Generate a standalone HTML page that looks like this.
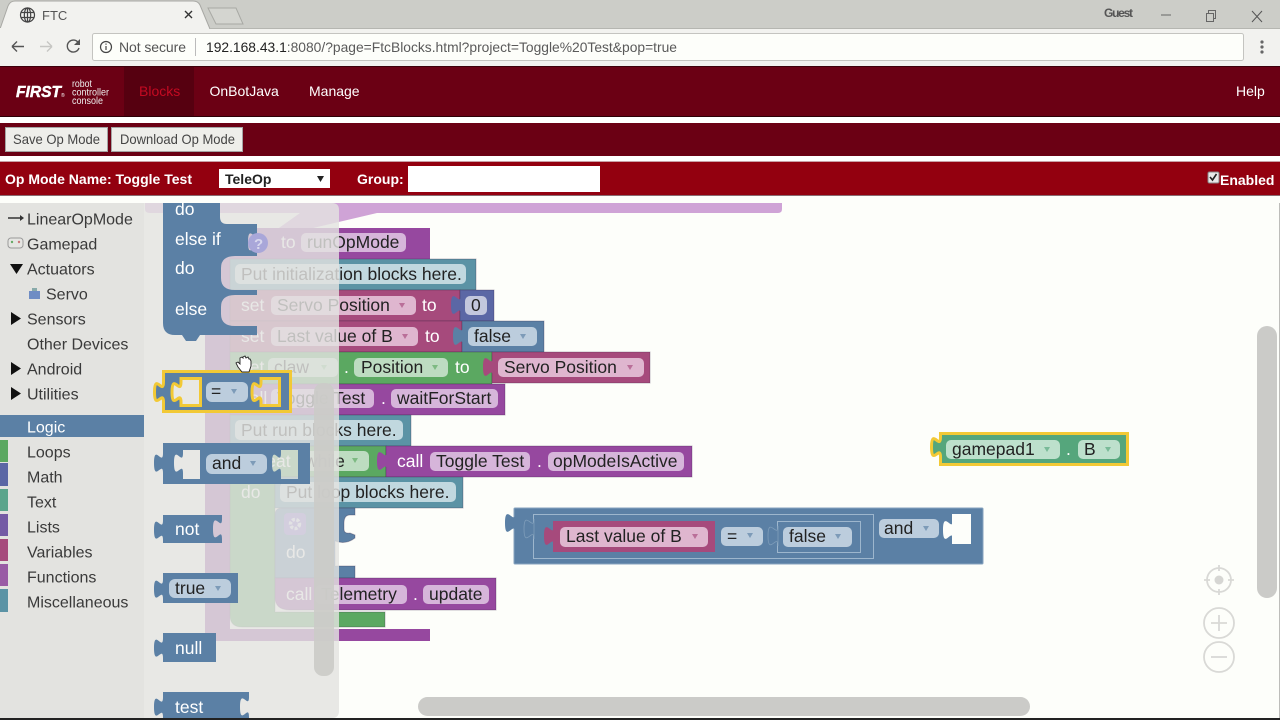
<!DOCTYPE html>
<html lang="en"><head><meta charset="utf-8"><title>FTC</title>
<style>
html,body{margin:0;padding:0;width:1280px;height:720px;overflow:hidden;background:#fdfefa}
svg{display:block;position:absolute;left:0;top:0}
text{font-family:"Liberation Sans",Arial,sans-serif;white-space:pre}
.b{font-size:17.5px;fill:#fff}
.f{font-size:17.5px;fill:#222}
.s{font-size:16px;fill:#3a3a3a}
.c{font-size:14px;fill:#5a5a5a}
.n{font-size:14px;fill:#fff}
.h{font-size:14px;fill:#444}
.w{font-size:14px;fill:#fff;font-weight:bold}
.rows rect,.rows path{stroke:rgba(50,30,60,.28);stroke-width:1}
</style></head><body>
<svg width="1280" height="720" viewBox="0 0 1280 720" xmlns="http://www.w3.org/2000/svg">
<defs>
<path id="tab" d="M1 0c0,13.500 -10,-11 -10,10s10,-4 10,10z"/>
<path id="ar" d="M-3 1h6l-3 5z" opacity=".65"/>
</defs>

<!-- browser chrome -->
<rect width="1280" height="29" fill="#cccdc8"/>
<path d="M0 29 L8 6 Q10 1 15 1 H193 Q198 1 200 5 L210 29z" fill="#f2f2ef" stroke="#a8a8a4"/>
<path d="M208 8 H236 L243 24 H216z" fill="#d4d5d0" stroke="#a8a9a4"/>
<rect y="28" width="1280" height="38" fill="#f2f2ef"/>
<rect y="28" x="209" width="1071" height="1" fill="#b5b6b1"/>
<g fill="none" stroke="#444" stroke-width="1.2"><circle cx="27.500" cy="15" r="7"/><ellipse cx="27.500" cy="15" rx="3.200" ry="7"/><path d="M21 12.500h13M21 17.500h13M27.500 8v14"/></g>
<text x="42" y="20" class="h" style="font-size:13px;fill:#555">FTC</text>
<path d="M185 11l7 7M192 11l-7 7" stroke="#333" stroke-width="1.400"/>
<text x="1104" y="17" style="font-size:12px;fill:#555;font-weight:bold" textLength="29">Guest</text>
<path d="M1161 15h10" stroke="#666"/>
<path d="M1206.500 13.500h7v8h-7zM1208.500 13.500v-3h7v8h-2" fill="none" stroke="#666"/>
<path d="M1252 11l10 11M1262 11l-10 11" stroke="#555" stroke-width="1"/>
<path d="M12 46.500h12M12 46.500l5-5M12 46.500l5 5" fill="none" stroke="#555" stroke-width="1.400"/>
<path d="M40 46.500h12M52 46.500l-5-5M52 46.500l-5 5" fill="none" stroke="#c6c6c3" stroke-width="1.400"/>
<path d="M78.500 43a6 6 0 1 0 .5 5" fill="none" stroke="#555" stroke-width="1.400"/><path d="M80 39v6h-6z" fill="#555"/>
<rect x="92.500" y="33.500" width="1151" height="27" rx="2" fill="#fdfefa" stroke="#c4c4c0"/>
<circle cx="106" cy="47" r="5.500" fill="none" stroke="#444" stroke-width="1.200"/><path d="M106 46v4M106 43.500v1.300" stroke="#444" stroke-width="1.200"/>
<text x="119" y="52" class="c" textLength="67" style="font-size:14px;fill:#555">Not secure</text>
<rect x="195" y="38" width="1" height="18" fill="#bbb"/>
<text x="206" y="52" class="c" textLength="471" lengthAdjust="spacingAndGlyphs"><tspan fill="#222">192.168.43.1</tspan>:8080/?page=FtcBlocks.html?project=Toggle%20Test&amp;pop=true</text>
<g fill="#666"><circle cx="1262" cy="42" r="1.600"/><circle cx="1262" cy="47" r="1.600"/><circle cx="1262" cy="52" r="1.600"/></g>

<!-- app header -->
<rect y="66" width="1280" height="51" fill="#6b0014"/>
<rect y="66" width="1280" height="1" fill="#3d000b"/>
<rect x="124" y="67" width="70" height="49" fill="#560010"/>
<rect y="116" width="1280" height="1" fill="#2e0008"/>
<text x="16" y="97" style="font-size:16px;font-weight:bold;font-style:italic;fill:#fff;stroke:#fff;stroke-width:.5" textLength="45" lengthAdjust="spacingAndGlyphs">FIRST</text>
<text x="61" y="97" style="font-size:5px;fill:#fff">®</text>
<text x="72" y="87" style="font-size:10px;fill:#eee" textLength="20" lengthAdjust="spacingAndGlyphs">robot</text>
<text x="72" y="95.500" style="font-size:10px;fill:#eee" textLength="37" lengthAdjust="spacingAndGlyphs">controller</text>
<text x="72" y="104" style="font-size:10px;fill:#eee" textLength="31" lengthAdjust="spacingAndGlyphs">console</text>
<text x="139" y="96" style="font-size:14px;fill:#c40a22">Blocks</text>
<text x="209.500" y="96" class="n">OnBotJava</text>
<text x="309" y="96" class="n">Manage</text>
<text x="1236" y="96" class="n">Help</text>

<rect y="117" width="1280" height="6" fill="#fff"/>
<rect y="123" width="1280" height="33" fill="#6b0014"/>
<rect y="156" width="1280" height="6" fill="#fff"/>
<rect y="161" width="1280" height="1" fill="#c9a0a6"/>
<rect y="162" width="1280" height="34" fill="#93000f"/>
<rect y="195" width="1280" height="1" fill="#8a6a70"/>
<rect x="5.500" y="127.500" width="102" height="24" fill="#eeeeea" stroke="#a5a5a5"/>
<text x="13" y="144" class="h" textLength="87" lengthAdjust="spacingAndGlyphs">Save Op Mode</text>
<rect x="111.500" y="127.500" width="131" height="24" fill="#eeeeea" stroke="#a5a5a5"/>
<text x="120" y="144" class="h" textLength="115" lengthAdjust="spacingAndGlyphs">Download Op Mode</text>
<text x="5" y="184" class="w" textLength="187">Op Mode Name: Toggle Test</text>
<rect x="219" y="169" width="111" height="19" fill="#fff"/>
<text x="225" y="184" style="font-size:14px;font-weight:bold;fill:#222">TeleOp</text>
<path d="M317 176h7l-3.500 6z" fill="#222"/>
<text x="357" y="184" class="w">Group:</text>
<rect x="408" y="166" width="192" height="26" fill="#fff"/>
<rect x="1208" y="172" width="11" height="11" rx="1.500" fill="#e8e8e8" stroke="#888"/>
<path d="M1210 177l2.500 3 4-6" fill="none" stroke="#222" stroke-width="1.600"/>
<text x="1220" y="185" class="w">Enabled</text>

<!-- workspace blocks -->
<rect y="196" width="1280" height="524" fill="#fdfefa"/>
<path d="M262 240 L377 213 H300z" fill="#cfa3d6"/>
<path d="M145 203H782V209Q782 213 778 213H150Q145 213 145 209z" fill="#cfa3d6"/>

<!-- outer function block -->
<path d="M212 228H430V259H230V629H430V641H212Q205 641 205 634V235Q205 228 212 228z" fill="#96489f"/>
<g class="rows">
<rect x="230" y="259" width="246" height="31" fill="#5b93a5"/>
<rect x="230" y="290" width="230" height="31" fill="#a64a7c"/>
<rect x="460" y="290" width="34" height="31" fill="#5b67a5"/>
<rect x="230" y="321" width="232" height="31" fill="#a64a7c"/>
<rect x="462" y="321" width="82" height="31" fill="#5b80a5"/>
<rect x="230" y="352" width="262" height="32" fill="#5ba861"/>
<rect x="492" y="352" width="158" height="31" fill="#a64a7c"/>
<rect x="230" y="384" width="275" height="31" fill="#96489f"/>
<rect x="230" y="415" width="181" height="31" fill="#5b93a5"/>
<path d="M230 446H386V477H275V612H385V627H242Q230 627 230 615z" fill="#5ba861"/>
<rect x="386" y="446" width="306" height="31" fill="#96489f"/>
<rect x="275" y="477" width="188" height="31" fill="#5b93a5"/>
<path d="M282 508H355V515H350Q344 515 344 523V529Q344 534 350 533L355 535V538Q346 545 335 541V566H355V578H275V515Q275 508 282 508z" fill="#5b80a5"/>
<path d="M275 578H496V610H290Q275 610 275 597z" fill="#96489f"/>
</g>
<use href="#tab" x="460" y="295" fill="#5b67a5"/>
<use href="#tab" x="462" y="326" fill="#5b80a5"/>
<use href="#tab" x="492" y="357" fill="#a64a7c"/>
<use href="#tab" x="386" y="451" fill="#96489f"/>
<rect x="284" y="513" width="22" height="22" rx="4" fill="#8a6fd0"/>
<circle cx="295" cy="524" r="4.500" fill="none" stroke="#dcdcf0" stroke-width="3.500" stroke-dasharray="3 1.500"/>

<g>
<rect x="301" y="233" width="105" height="19" rx="5" fill="#d6b5da"/>
<text x="281" y="248" class="b">to</text><text x="307" y="248" class="f">runOpMode</text>
<rect x="235" y="264" width="231" height="20" rx="5" fill="#c1d8df"/>
<text x="241" y="280" class="f">Put initialization blocks here.</text>
<text x="241" y="311" class="b">set</text>
<rect x="271" y="296" width="145" height="19" rx="5" fill="#dfb6cf"/>
<text x="277" y="311" class="f">Servo Position</text>
<use href="#ar" x="402" y="302" fill="#a64a7c"/>
<text x="422" y="311" class="b">to</text>
<rect x="465" y="296" width="22" height="19" rx="5" fill="#c3c7dd"/><text x="471" y="311" class="f">0</text>
<text x="241" y="342" class="b">set</text>
<rect x="271" y="327" width="147" height="19" rx="5" fill="#dfb6cf"/>
<text x="277" y="342" class="f">Last value of B</text>
<use href="#ar" x="405" y="333" fill="#a64a7c"/>
<text x="425" y="342" class="b">to</text>
<rect x="468" y="327" width="69" height="19" rx="5" fill="#bccddd"/>
<text x="474" y="342" class="f">false</text><use href="#ar" x="523" y="333" fill="#5b80a5"/>
<text x="241" y="373" class="b">set</text>
<rect x="268" y="358" width="70" height="19" rx="5" fill="#bddcc1"/>
<text x="274" y="373" class="f">claw</text><use href="#ar" x="324" y="364" fill="#5ba861"/>
<text x="344" y="373" class="b">.</text>
<rect x="354" y="358" width="94" height="19" rx="5" fill="#bddcc1"/>
<text x="361" y="373" class="f">Position</text><use href="#ar" x="435" y="364" fill="#5ba861"/>
<text x="455" y="373" class="b">to</text>
<rect x="498" y="358" width="146" height="19" rx="5" fill="#dfb6cf"/>
<text x="504" y="373" class="f">Servo Position</text><use href="#ar" x="630" y="364" fill="#a64a7c"/>
<text x="241" y="404" class="b">call</text>
<rect x="271" y="389" width="103" height="19" rx="5" fill="#d6b5da"/>
<text x="277" y="404" class="f">Toggle Test</text>
<text x="381" y="404" class="b">.</text>
<rect x="391" y="389" width="107" height="19" rx="5" fill="#d6b5da"/>
<text x="397" y="404" class="f">waitForStart</text>
<rect x="235" y="420" width="168" height="20" rx="5" fill="#c1d8df"/>
<text x="241" y="436" class="f">Put run blocks here.</text>
<text x="241" y="467" class="b">repeat</text>
<rect x="300" y="451" width="69" height="20" rx="5" fill="#bddcc1"/>
<text x="305" y="467" class="f">while</text><use href="#ar" x="355" y="457" fill="#5ba861"/>
<text x="397" y="467" class="b">call</text>
<rect x="430" y="452" width="100" height="19" rx="5" fill="#d6b5da"/>
<text x="436" y="467" class="f">Toggle Test</text>
<text x="537" y="467" class="b">.</text>
<rect x="548" y="452" width="136" height="19" rx="5" fill="#d6b5da"/>
<text x="553" y="467" class="f">opModeIsActive</text>
<text x="241" y="498" class="b">do</text>
<rect x="280" y="482" width="176" height="20" rx="5" fill="#c1d8df"/>
<text x="286" y="498" class="f">Put loop blocks here.</text>
<text x="286" y="558" class="b">do</text>
<text x="286" y="600" class="b">call</text>
<rect x="315" y="585" width="92" height="19" rx="5" fill="#d6b5da"/>
<text x="321" y="600" class="f">Telemetry</text>
<text x="413" y="600" class="b">.</text>
<rect x="423" y="585" width="66" height="19" rx="5" fill="#d6b5da"/>
<text x="429" y="600" class="f">update</text>
</g>

<!-- free blocks -->
<rect x="514" y="508" width="469" height="56" rx="1" fill="#5b80a5" stroke="#87a3bf" stroke-width="1"/>
<use href="#tab" x="514" y="513" fill="#5b80a5"/>
<rect x="533.500" y="514.500" width="340" height="44" fill="none" stroke="#9db6cd"/>
<use href="#tab" x="533" y="519" fill="#5b80a5" stroke="#7f9dba" stroke-width=".8"/>
<rect x="553" y="521" width="162" height="31" fill="#a64a7c"/><use href="#tab" x="553" y="526" fill="#a64a7c"/>
<rect x="560" y="527" width="148" height="20" rx="5" fill="#dfb6cf"/>
<text x="566" y="542" class="f">Last value of B</text><use href="#ar" x="695" y="533" fill="#a64a7c"/>
<rect x="721" y="527" width="42" height="19" rx="5" fill="#bccddd"/>
<text x="727" y="542" class="f">=</text><use href="#ar" x="750" y="532" fill="#5b80a5"/>
<rect x="777.500" y="521.500" width="83" height="31" fill="none" stroke="#9db6cd"/>
<use href="#tab" x="777" y="526" fill="#5b80a5" stroke="#7f9dba" stroke-width=".8"/>
<rect x="783" y="527" width="69" height="20" rx="5" fill="#bccddd"/>
<text x="789" y="542" class="f">false</text><use href="#ar" x="838" y="533" fill="#5b80a5"/>
<rect x="879" y="519" width="60" height="19" rx="5" fill="#bccddd"/>
<text x="884" y="534" class="f">and</text><use href="#ar" x="926" y="525" fill="#5b80a5"/>
<rect x="952" y="514" width="19" height="30" fill="#fdfefa"/><use href="#tab" x="952" y="520" fill="#fdfefa"/>

<path d="M940.500 433.500H1127.500V464.500H940.500V457c0,-13 -9,10 -9,-10s9,4 9,-10z" fill="#55a67c" stroke="#f2c935" stroke-width="3"/>
<rect x="946" y="440" width="114" height="19" rx="5" fill="#bde0cc"/>
<text x="952" y="455" class="f">gamepad1</text><use href="#ar" x="1047" y="446" fill="#55a67c"/>
<text x="1066" y="455" class="b">.</text>
<rect x="1078" y="440" width="42" height="19" rx="5" fill="#bde0cc"/>
<text x="1084" y="455" class="f">B</text><use href="#ar" x="1108" y="446" fill="#55a67c"/>

<!-- workspace controls -->
<g fill="none" stroke="#d9d9d6" stroke-width="1.800">
<circle cx="1219" cy="580" r="12"/><path d="M1219 565v6M1219 589v6M1204 580h6M1228 580h6"/>
<circle cx="1219" cy="623" r="15"/><path d="M1211 623h16M1219 615v16"/>
<circle cx="1219" cy="657" r="15"/><path d="M1211 657h16"/>
</g>
<circle cx="1219" cy="580" r="4.500" fill="#d6d6d3"/>
<rect x="1257" y="326" width="20" height="272" rx="10" fill="#cbcbc8"/>
<rect x="418" y="697" width="612" height="19" rx="9.500" fill="#cbcbc8"/>
<rect x="1279" y="203" width="1" height="517" fill="#bdbdba"/>

<!-- toolbox -->
<rect y="203" width="144" height="517" fill="#e3e3e0"/>
<path d="M144 203H332Q339 203 339 210V711Q339 718 332 718H144z" fill="#e3e3e0" opacity=".82"/>
<rect y="415" width="144" height="22" fill="#5b80a5"/>
<rect y="440" width="8" height="22" fill="#5ba861"/>
<rect y="463" width="8" height="23" fill="#5b67a5"/>
<rect y="489" width="8" height="22" fill="#5ba58c"/>
<rect y="514" width="8" height="22" fill="#745ba5"/>
<rect y="539" width="8" height="22" fill="#a64a7c"/>
<rect y="564" width="8" height="22" fill="#995ba5"/>
<rect y="589" width="8" height="23" fill="#5b93a5"/>
<text x="27" y="224.500" class="s">LinearOpMode</text>
<path d="M8 218h14" stroke="#333" stroke-width="1.500"/><path d="M20 215l4 3-4 3z" fill="#333"/>
<text x="27" y="249.500" class="s">Gamepad</text>
<rect x="8" y="238" width="15" height="10" rx="3" fill="#e6e6e3" stroke="#999"/><circle cx="12" cy="242" r="1.200" fill="#6a6"/><circle cx="19" cy="242" r="1.200" fill="#c77"/>
<text x="27" y="274.500" class="s">Actuators</text><path d="M10 264h13l-6.500 10z" fill="#111"/>
<text x="46" y="299.500" class="s">Servo</text><rect x="29" y="291" width="11" height="8" fill="#6f8dc4"/><rect x="32" y="288" width="5" height="3" fill="#8aa"/>
<text x="27" y="324.500" class="s">Sensors</text><path d="M11 312l10 6.500-10 6.500z" fill="#111"/>
<text x="27" y="349.500" class="s">Other Devices</text>
<text x="27" y="374.500" class="s">Android</text><path d="M11 362l10 6.500-10 6.500z" fill="#111"/>
<text x="27" y="399.500" class="s">Utilities</text><path d="M11 387l10 6.500-10 6.500z" fill="#111"/>
<text x="27" y="432.500" class="s" style="fill:#fff">Logic</text>
<text x="27" y="457.500" class="s">Loops</text>
<text x="27" y="482.500" class="s">Math</text>
<text x="27" y="507.500" class="s">Text</text>
<text x="27" y="532.500" class="s">Lists</text>
<text x="27" y="557.500" class="s">Variables</text>
<text x="27" y="582.500" class="s">Functions</text>
<text x="27" y="607.500" class="s">Miscellaneous</text>

<!-- flyout scrollbar -->
<rect x="314" y="383" width="20" height="293" rx="9" fill="#cbcbc8" opacity=".92"/>

<!-- flyout blocks -->
<path d="M163 203H220V217Q220 224 227 224H257V232c0,13 -9,-10 -9,10s9,-4 9,10V256H235Q221 256 221 268V278Q221 290 235 290H257V295H235Q221 295 221 307V314Q221 326 235 326H257V335H200L196 341H186L182 335H175Q163 335 163 323z" fill="#5b80a5"/>
<text x="175" y="215" class="b">do</text>
<text x="175" y="245" class="b">else if</text>
<text x="175" y="274" class="b">do</text>
<text x="175" y="315" class="b">else</text>
<circle cx="258" cy="243" r="10" fill="#a9a7d9"/>
<text x="254" y="249" style="font-size:15px;font-weight:bold;fill:#d8d8ee">?</text>

<path fill-rule="evenodd" d="M163.500 371.500H290.500V411.500H163.500V402c0,-13 -9,10 -9,-10s9,4 9,-10zM181 378.500H200.500V405.500H181V402c0,-13 -9,10 -9,-10s9,4 9,-10zM261 378.500H279.500V405.500H261V402c0,-13 -9,10 -9,-10s9,4 9,-10z" fill="#5b80a5" stroke="#f2c935" stroke-width="3"/>
<rect x="206" y="382" width="42" height="20" rx="6" fill="#bccddd"/>
<text x="211" y="397" class="f">=</text><use href="#ar" x="234" y="388" fill="#5b80a5"/>

<path fill-rule="evenodd" d="M163 443H310V484H163V473c0,-13 -9,10 -9,-10s9,4 9,-10zM183 450H200V479H183V473c0,-13 -9,10 -9,-10s9,4 9,-10zM281 450H298V479H281V473c0,-13 -9,10 -9,-10s9,4 9,-10z" fill="#5b80a5"/>
<rect x="206" y="454" width="61" height="20" rx="6" fill="#bccddd"/>
<text x="212" y="469" class="f">and</text><use href="#ar" x="253" y="460" fill="#5b80a5"/>

<path d="M163 515H222V519c0,13 -9,-10 -9,10s9,-4 9,10V543H163V540c0,-13 -9,10 -9,-10s9,4 9,-10z" fill="#5b80a5"/>
<text x="175" y="535" class="b">not</text>

<path d="M163 573H238V603H163V599c0,-13 -9,10 -9,-10s9,4 9,-10z" fill="#5b80a5"/>
<rect x="169" y="579" width="62" height="19" rx="6" fill="#bccddd"/>
<text x="175" y="594" class="f">true</text><use href="#ar" x="218" y="585" fill="#5b80a5"/>

<path d="M163 633H216V662H163V658c0,-13 -9,10 -9,-10s9,4 9,-10z" fill="#5b80a5"/>
<text x="175" y="654" class="b">null</text>

<path d="M163 692H249V697c0,13 -9,-10 -9,10s9,-4 9,10V718H163V717c0,-13 -9,10 -9,-10s9,4 9,-10z" fill="#5b80a5"/>
<text x="175" y="713" class="b">test</text>

<!-- hand cursor -->
<path d="M238 367l-2-4 2-1 2 2v-6l2-1 1 1v-1l2-1 1 2 2-1 1 2 1 0 1 2v5l-2 6h-7z" fill="#fff" stroke="#222" stroke-width=".9"/>

<rect y="718" width="1280" height="2" fill="#222"/>
</svg>
</body></html>
